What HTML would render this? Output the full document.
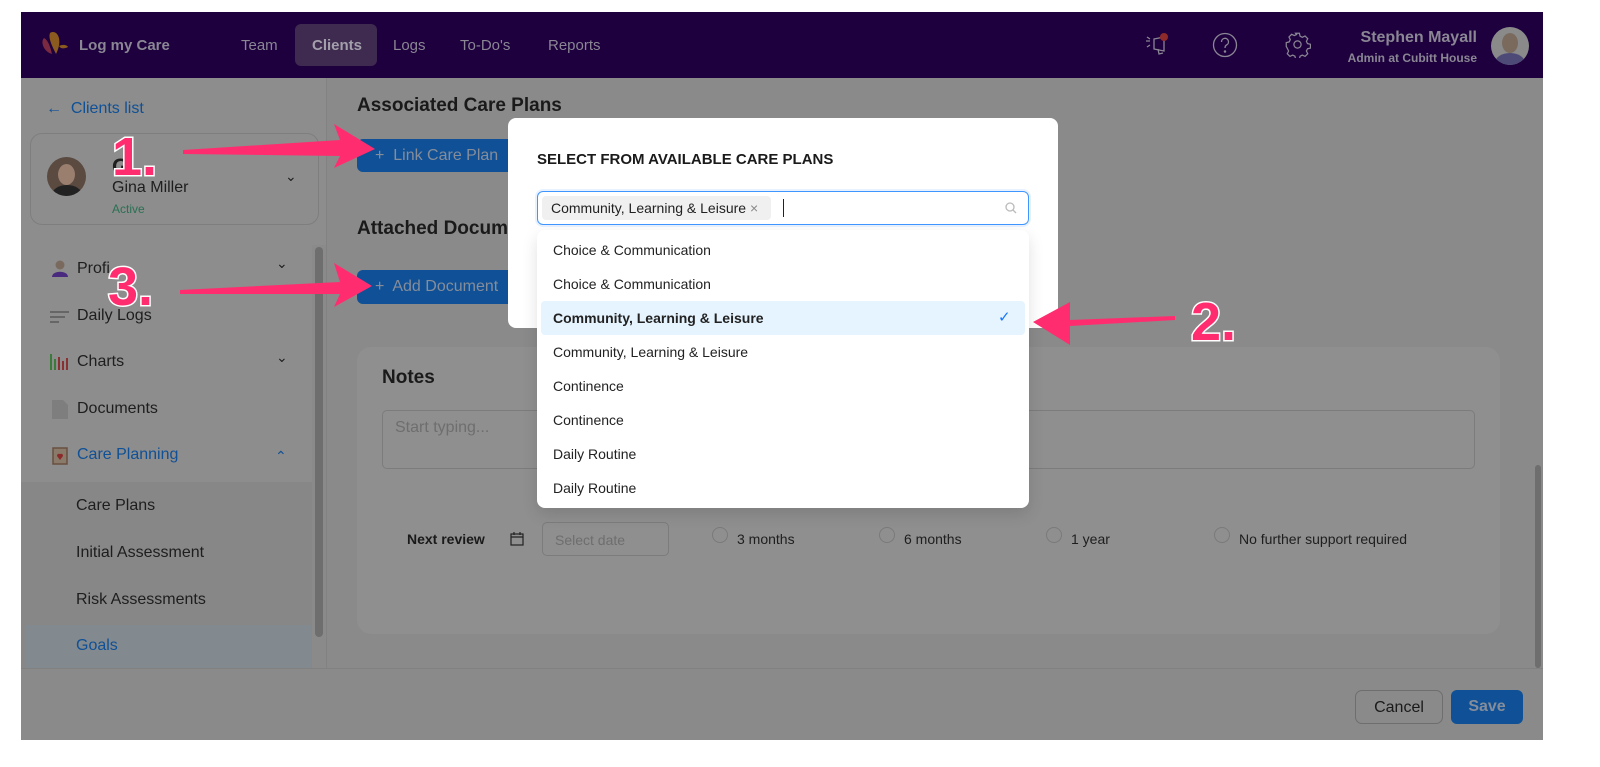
<!DOCTYPE html>
<html><head><meta charset="utf-8"><style>
*{box-sizing:border-box;margin:0;padding:0}
body{width:1600px;height:767px;background:#fff;font-family:"Liberation Sans",sans-serif;position:relative;overflow:hidden}
.a{position:absolute}
.frame{left:21px;top:12px;width:1522px;height:728px;background:#8a8a8a;overflow:hidden}
.nav{left:21px;top:12px;width:1522px;height:66px;background:#1d003d}
.navt{color:#8a8694;font-size:15px;top:37px}
.side{left:21px;top:78px;width:306px;height:590px;background:#8d8d8d;border-right:1px solid #828282}
.si{font-size:16px;color:#1e1e1e}
.foot{left:21px;top:668px;width:1522px;height:72px;background:#8a8a8a;border-top:1px solid #818181}
.btn{background:#0f5096;color:#858d9a;border-radius:6px;font-size:16px}
.dd{font-size:14px;color:#222;left:553px}
.radio{width:16px;height:16px;border:1px solid #7a7a7a;border-radius:50%}
.rt{font-size:14px;color:#1e1e1e}
</style></head><body>
<div class="a frame"></div>
<div class="a nav"></div>
<!-- logo -->
<svg class="a" style="left:40px;top:30px" width="30" height="26" viewBox="0 0 30 26"><path d="M4 8 C0 12 4 22 12 24 C10 16 8 10 4 8Z" fill="#7a2a40"/><path d="M10 3 C16 -1 24 8 16 24 C12 16 8 8 10 3Z" fill="#8a5a1e"/><path d="M19 16 C23 14 27 15 28 17 C24 19 21 19 19 16Z" fill="#8a5a1e"/></svg>
<div class="a" style="left:79px;top:37px;font-size:15px;font-weight:bold;color:#8a8694">Log my Care</div>
<div class="a" style="left:295px;top:24px;width:82px;height:42px;background:#3f2b50;border-radius:6px"></div>
<div class="a navt" style="left:241px">Team</div>
<div class="a navt" style="left:312px;font-weight:bold;color:#a39fab">Clients</div>
<div class="a navt" style="left:393px">Logs</div>
<div class="a navt" style="left:460px">To-Do's</div>
<div class="a navt" style="left:548px">Reports</div>
<svg class="a" style="left:1144px;top:32px" width="30" height="26" viewBox="0 0 30 26" fill="none" stroke="#8a8694" stroke-width="1.3"><path d="M10 7 L20 5 L20 19 L10 17 Z M14 17 L15 22 L19 21"/><path d="M2 9h4M3 5l3 2M3 15l3-2"/><circle cx="20" cy="5" r="4" fill="#8e2a2a" stroke="none"/></svg>
<svg class="a" style="left:1212px;top:32px" width="26" height="26" viewBox="0 0 26 26" fill="none" stroke="#8a8694" stroke-width="1.3"><circle cx="13" cy="13" r="11.5"/><path d="M9.5 10a3.5 3.5 0 1 1 5 3c-1.2.6-1.5 1.3-1.5 3"/><circle cx="13" cy="19.5" r=".6" fill="#8a8694"/></svg>
<svg class="a" style="left:1284px;top:31px" width="27" height="27" viewBox="0 0 24 24" fill="none" stroke="#8a8694" stroke-width="1.1"><circle cx="12" cy="12" r="3.2"/><path d="M10.3 2h3.4l.6 2.6 2 1 2.4-1.2 2.4 2.4-1.2 2.4 1 2 2.6.6v3.4l-2.6.6-1 2 1.2 2.4-2.4 2.4-2.4-1.2-2 1-.6 2.6h-3.4l-.6-2.6-2-1-2.4 1.2-2.4-2.4 1.2-2.4-1-2L2 13.7v-3.4l2.6-.6 1-2-1.2-2.4 2.4-2.4 2.4 1.2 2-1z"/></svg>
<div class="a" style="right:123px;top:29px;font-size:16px;font-weight:bold;color:#8a8694">Stephen Mayall</div>
<div class="a" style="right:123px;top:51px;font-size:12px;font-weight:bold;color:#8a8694">Admin at Cubitt House</div>
<div class="a" style="left:1491px;top:27px;width:38px;height:38px;border-radius:50%;background:#8a8a8a;overflow:hidden"><div class="a" style="left:11px;top:6px;width:16px;height:20px;border-radius:50%;background:#7a6a5e"></div><div class="a" style="left:4px;top:26px;width:30px;height:20px;border-radius:50%;background:#4e4a78"></div></div>
<!-- sidebar -->
<div class="a side"></div>
<div class="a" style="left:21px;top:482px;width:291px;height:186px;background:#878787"></div>
<div class="a" style="left:26px;top:625px;width:285px;height:43px;background:#838a8f"></div>
<div class="a" style="left:312px;top:245px;width:14px;height:423px;background:#8a8a8a"></div>
<div class="a" style="left:315px;top:247px;width:8px;height:390px;background:#6e6e6e;border-radius:4px"></div>
<div class="a" style="left:46px;top:100px;font-size:16px;color:#0f5096">←&nbsp; Clients list</div>
<div class="a" style="left:30px;top:133px;width:289px;height:92px;border:1px solid #7e7e7e;border-radius:12px"></div>
<div class="a" style="left:47px;top:157px;width:39px;height:39px;border-radius:50%;background:#5a4a40;overflow:hidden"><div class="a" style="left:11px;top:7px;width:17px;height:21px;border-radius:50%;background:#9a7e6e"></div><div class="a" style="left:5px;top:28px;width:30px;height:20px;border-radius:50%;background:#222"></div></div>
<div class="a" style="left:112px;top:154px;font-size:22px;font-weight:bold;color:#1e1e1e">G</div>
<div class="a" style="left:112px;top:179px;font-size:16px;color:#1e1e1e">Gina Miller</div>
<div class="a" style="left:112px;top:202px;font-size:12px;color:#2a7054">Active</div>
<div class="a si" style="left:285px;top:168px;font-size:14px">⌄</div>
<svg class="a" style="left:51px;top:259px" width="18" height="18"><circle cx="9" cy="6" r="4.5" fill="#7a6a5e"/><path d="M1 18 C1 11 17 11 17 18Z" fill="#4a2a7e"/></svg>
<div class="a si" style="left:77px;top:260px">Profi</div>
<div class="a si" style="left:276px;top:255px;font-size:14px">⌄</div>
<svg class="a" style="left:50px;top:310px" width="20" height="14" stroke="#5a5a5a" stroke-width="1.5"><path d="M0 2h19M0 7h15M0 12h9"/></svg>
<div class="a si" style="left:77px;top:307px">Daily Logs</div>
<svg class="a" style="left:50px;top:354px" width="20" height="16"><rect x="0" y="0" width="2" height="16" fill="#3a7a3a"/><rect x="4" y="5" width="2" height="11" fill="#3a7a3a"/><rect x="8" y="3" width="2" height="13" fill="#8a3030"/><rect x="12" y="7" width="2" height="9" fill="#8a3030"/><rect x="16" y="4" width="2" height="12" fill="#8a3030"/></svg>
<div class="a si" style="left:77px;top:353px">Charts</div>
<div class="a si" style="left:276px;top:349px;font-size:14px">⌄</div>
<svg class="a" style="left:52px;top:400px" width="16" height="19"><path d="M0 0h11l5 5v14H0z" fill="#7e7e7e"/></svg>
<div class="a si" style="left:77px;top:400px">Documents</div>
<svg class="a" style="left:52px;top:446px" width="16" height="19"><rect x="1" y="2" width="14" height="16" fill="#8a7a6a" stroke="#6a5040" stroke-width="1.5"/><path d="M8 14 L5 10 A2 2 0 0 1 8 8 A2 2 0 0 1 11 10Z" fill="#8a2a2a"/></svg>
<div class="a si" style="left:77px;top:446px;color:#0f5096">Care Planning</div>
<div class="a si" style="left:275px;top:448px;font-size:14px;color:#0f5096">⌃</div>
<div class="a si" style="left:76px;top:497px">Care Plans</div>
<div class="a si" style="left:76px;top:544px">Initial Assessment</div>
<div class="a si" style="left:76px;top:591px">Risk Assessments</div>
<div class="a si" style="left:76px;top:637px;color:#0f5096">Goals</div>
<!-- main -->
<div class="a" style="left:357px;top:95px;font-size:19px;font-weight:bold;color:#1a1a1a">Associated Care Plans</div>
<div class="a btn" style="left:357px;top:139px;width:160px;height:33px;padding:8px 0 0 18px">+&nbsp; Link Care Plan</div>
<div class="a" style="left:357px;top:218px;font-size:19px;font-weight:bold;color:#1a1a1a">Attached Documents</div>
<div class="a btn" style="left:357px;top:270px;width:160px;height:34px;padding:8px 0 0 18px">+&nbsp; Add Document</div>
<div class="a" style="left:357px;top:347px;width:1143px;height:287px;background:#8f8f8f;border-radius:14px"></div>
<div class="a" style="left:382px;top:367px;font-size:19px;font-weight:bold;color:#1a1a1a">Notes</div>
<div class="a" style="left:382px;top:410px;width:1093px;height:59px;border:1px solid #7c7c7c;border-radius:5px;padding:8px 12px;font-size:16px;color:#6e6e6e">Start typing...</div>
<div class="a" style="left:407px;top:531px;font-size:14px;font-weight:bold;color:#1a1a1a">Next review</div>
<svg class="a" style="left:510px;top:531px" width="14" height="15" fill="none" stroke="#222" stroke-width="1.2"><rect x="1" y="3" width="12" height="11"/><path d="M1 6h12M4 1v3M10 1v3"/></svg>
<div class="a" style="left:542px;top:522px;width:127px;height:34px;border:1px solid #7c7c7c;border-radius:5px;padding:9px 12px;font-size:14px;color:#6e6e6e">Select date</div>
<div class="a radio" style="left:712px;top:527px"></div><div class="a rt" style="left:737px;top:531px">3 months</div>
<div class="a radio" style="left:879px;top:527px"></div><div class="a rt" style="left:904px;top:531px">6 months</div>
<div class="a radio" style="left:1046px;top:527px"></div><div class="a rt" style="left:1071px;top:531px">1 year</div>
<div class="a radio" style="left:1214px;top:527px"></div><div class="a rt" style="left:1239px;top:531px">No further support required</div>
<div class="a" style="left:1535px;top:465px;width:6px;height:203px;background:#6e6e6e;border-radius:3px"></div>
<div class="a foot"></div>
<div class="a" style="left:1355px;top:690px;width:88px;height:34px;border:1px solid #6e6e6e;border-radius:7px;font-size:16px;color:#1a1a1a;text-align:center;padding-top:8px">Cancel</div>
<div class="a btn" style="left:1451px;top:690px;width:72px;height:34px;text-align:center;padding-top:8px;font-weight:bold">Save</div>
<!-- modal -->
<div class="a" style="left:508px;top:118px;width:550px;height:210px;background:#fff;border-radius:8px"></div>
<div class="a" style="left:537px;top:151px;font-size:15px;font-weight:bold;color:#1a1a1a">SELECT FROM AVAILABLE CARE PLANS</div>
<div class="a" style="left:537px;top:191px;width:492px;height:34px;border:1px solid #4096ff;border-radius:6px;box-shadow:0 0 0 2px rgba(64,150,255,.12)"></div>
<div class="a" style="left:542px;top:196px;width:229px;height:24px;background:#f0f0f0;border-radius:4px;font-size:14px;color:#222;padding:4px 0 0 9px">Community, Learning &amp; Leisure <span style="color:#888">×</span></div>
<div class="a" style="left:783px;top:199px;width:1px;height:18px;background:#222"></div>
<svg class="a" style="left:1005px;top:202px" width="12" height="12" fill="none" stroke="#bbb" stroke-width="1.3"><circle cx="5" cy="5" r="4"/><path d="M8 8l3 3"/></svg>
<div class="a" style="left:537px;top:230px;width:492px;height:278px;background:#fff;border-radius:8px;box-shadow:0 6px 16px rgba(0,0,0,.12)"></div>
<div class="a" style="left:541px;top:301px;width:484px;height:34px;background:#e6f4ff;border-radius:4px"></div>
<div class="a dd" style="top:242px">Choice &amp; Communication</div>
<div class="a dd" style="top:276px">Choice &amp; Communication</div>
<div class="a dd" style="top:310px;font-weight:bold">Community, Learning &amp; Leisure</div>
<div class="a" style="left:998px;top:308px;font-size:15px;color:#1677ff">✓</div>
<div class="a dd" style="top:344px">Community, Learning &amp; Leisure</div>
<div class="a dd" style="top:378px">Continence</div>
<div class="a dd" style="top:412px">Continence</div>
<div class="a dd" style="top:446px">Daily Routine</div>
<div class="a dd" style="top:480px">Daily Routine</div>
<!-- annotations -->
<svg class="a" style="left:0;top:0" width="1600" height="767">
<g fill="#ff2d6f">
<polygon points="183,150 340,140 334,124 375,149 334,168 340,156 183,154"/>
<polygon points="180,290 340,282 334,263 372,286 334,307 340,294 180,294"/>
<polygon points="1175,316 1070,320 1070,302 1033,322 1070,345 1070,326 1175,320"/>
</g>
<g font-family="Liberation Sans" font-weight="bold" fill="#ff2d6f" stroke="#fff" stroke-width="3" paint-order="stroke" font-size="54">
<text x="112" y="175">1.</text>
<text x="108" y="305">3.</text>
<text x="1191" y="340">2.</text>
</g>
</svg>
</body></html>
